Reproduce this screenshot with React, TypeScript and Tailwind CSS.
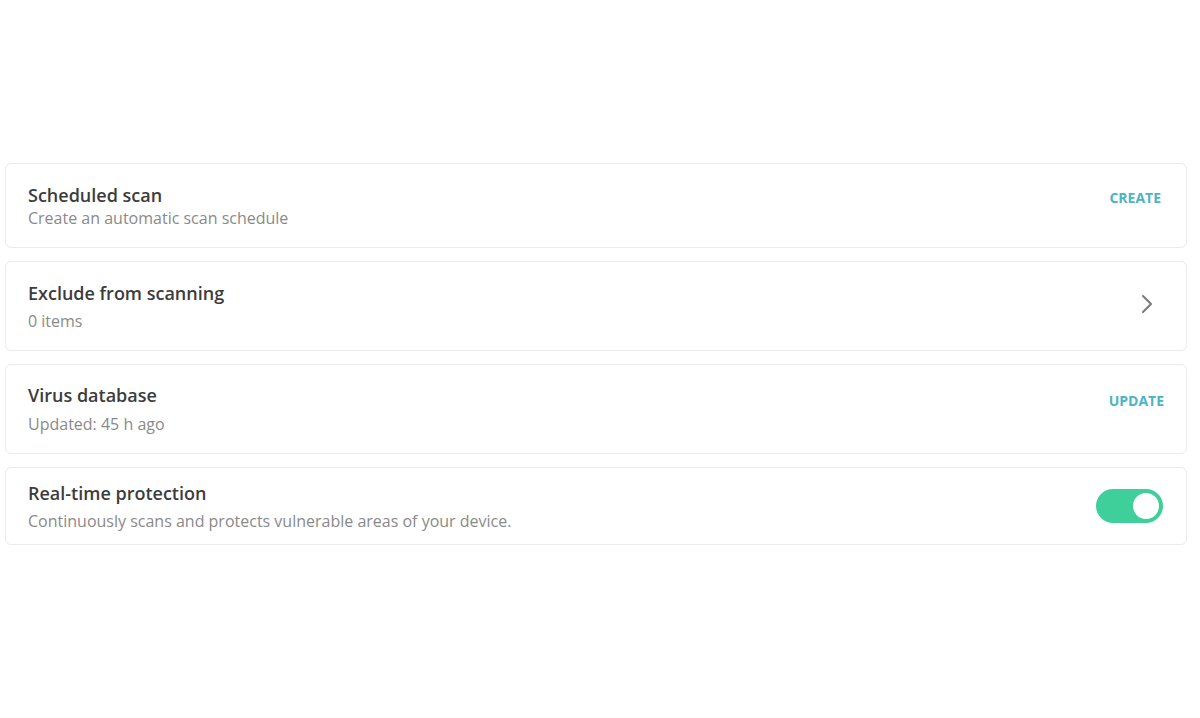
import { FunctionComponent } from "react";

const font = { fontFamily: '"Open Sans", "Noto Sans", sans-serif' };

const Title: FunctionComponent<{ text: string }> = ({ text }) => (
  <div className="text-[18px] leading-[24px] font-semibold text-[#3c3c3c]">{text}</div>
);

const Sub: FunctionComponent<{ text: string }> = ({ text }) => (
  <div className="text-[16px] leading-[22px] text-[#8a8a8a]">{text}</div>
);

const App: FunctionComponent = () => {
  return (
    <div className="w-[1200px] h-[718px] bg-white" style={font}>
      <div className="pt-[163px] pl-[5px] pr-[13px] flex flex-col gap-[13px]">
        {/* scheduled scan */}
        <div className="flex items-center justify-between rounded-md border border-[#ebebeb] pl-[22px] pr-[25px] pt-[19px] pb-[18px]">
          <div>
            <Title text="Scheduled scan" />
            <Sub text="Create an automatic scan schedule" />
          </div>
          <button className="text-[14px] font-bold text-[#4bb4c5] -mt-[18px]">CREATE</button>
        </div>

        {/* exclude */}
        <div className="flex items-center justify-between rounded-md border border-[#ebebeb] pl-[22px] pr-[31px] pt-[19px] pb-[18px]">
          <div className="flex flex-col gap-[5px]">
            <Title text="Exclude from scanning" />
            <Sub text="0 items" />
          </div>
          <svg width="16" height="22" viewBox="0 0 16 22" fill="none" className="-mt-[6px]">
            <path d="M4 3l8 8-8 8" stroke="#7a7a7a" strokeWidth="2" strokeLinecap="round" strokeLinejoin="round" />
          </svg>
        </div>

        {/* virus database */}
        <div className="flex items-center justify-between rounded-md border border-[#ebebeb] pl-[22px] pr-[22px] pt-[18px] pb-[18px]">
          <div className="flex flex-col gap-[6px]">
            <Title text="Virus database" />
            <Sub text="Updated: 45 h ago" />
          </div>
          <button className="text-[14px] font-bold text-[#4bb4c5] -mt-[18px]">UPDATE</button>
        </div>

        {/* real-time */}
        <div className="flex items-center justify-between rounded-md border border-[#ebebeb] pl-[22px] pr-[23px] pt-[13px] pb-[12px]">
          <div className="flex flex-col gap-[5px]">
            <Title text="Real-time protection" />
            <Sub text="Continuously scans and protects vulnerable areas of your device." />
          </div>
          <div className="w-[67px] h-[34px] -mt-[2px] rounded-full bg-[#3ecf9b] flex items-center justify-end pr-[2px]">
            <div className="w-[30px] h-[30px] rounded-full bg-white border-2 border-[#3ecf9b]" />
          </div>
        </div>
      </div>
    </div>
  );
};

export default App;
